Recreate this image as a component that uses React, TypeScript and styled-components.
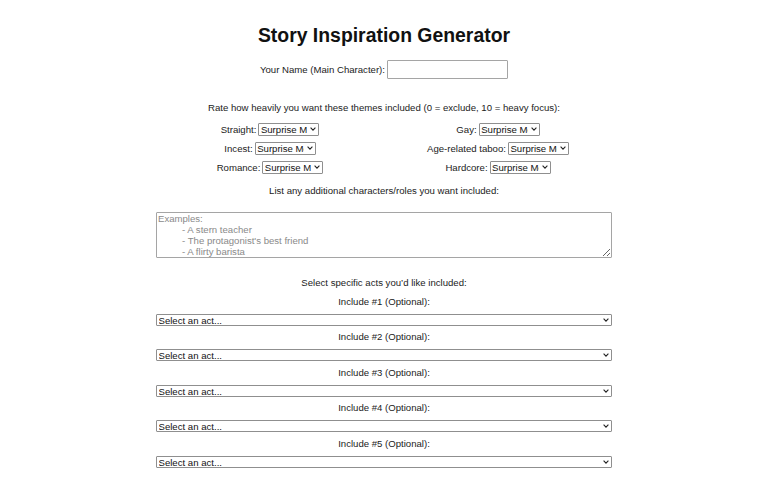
import React from "react";
import styled, { createGlobalStyle } from "styled-components";

const GlobalStyle = createGlobalStyle`
  html, body {
    margin: 0;
    padding: 0;
    background: #ffffff;
  }
  body {
    font-family: "Liberation Sans", Arial, sans-serif;
    font-size: 9.6px;
    color: #222222;
  }
  * {
    box-sizing: border-box;
  }
`;

const Page = styled.main`
  width: 456px;
  margin: 0 auto;
  padding-top: 24px;
  display: flex;
  flex-direction: column;
  align-items: center;
`;

const Title = styled.h1`
  margin: 0;
  font-size: 19.4px;
  line-height: 22px;
  font-weight: bold;
  color: #111111;
  text-align: center;
`;

const NameRow = styled.div`
  margin-top: 14px;
  display: flex;
  align-items: center;
  gap: 2px;
  height: 19px;
`;

const Label = styled.label`
  font-size: 9.6px;
  line-height: 11px;
  color: #222222;
  white-space: nowrap;
`;

const TextInput = styled.input`
  width: 121px;
  height: 19px;
  margin: 0;
  padding: 1px 2px;
  font: inherit;
  border: 1px solid #a5a5a5;
  border-radius: 1px;
  background: #ffffff;
`;

const Note = styled.p<{ $top: number }>`
  margin: ${(p) => p.$top}px 0 0;
  font-size: 9.6px;
  line-height: 11px;
  color: #222222;
  text-align: center;
`;

const ThemeGrid = styled.div`
  margin-top: 10px;
  width: 100%;
  display: grid;
  grid-template-columns: 1fr 1fr;
  row-gap: 6px;
`;

const ThemeItem = styled.div`
  display: flex;
  justify-content: center;
  align-items: center;
  gap: 2px;
  height: 13px;
`;

/* Select box with a drawn chevron laid over its right end */
const SelectFrame = styled.div<{ $width: string; $height: number }>`
  position: relative;
  width: ${(p) => p.$width};
  height: ${(p) => p.$height}px;
  flex: none;
`;

const PlainSelect = styled.select`
  appearance: none;
  -webkit-appearance: none;
  display: block;
  width: 100%;
  height: 100%;
  margin: 0;
  padding: 0 11px 0 1.5px;
  font-family: inherit;
  font-size: 9.6px;
  line-height: 11px;
  color: #111111;
  border: 1px solid #8f8f8f;
  border-radius: 1px;
  background: #ffffff;
  outline: none;
`;

const Chevron = styled.svg`
  position: absolute;
  right: 3px;
  top: 50%;
  width: 6px;
  height: 4px;
  margin-top: -2px;
  pointer-events: none;
`;

const ExtraCharacters = styled.textarea`
  margin-top: 16.5px;
  width: 100%;
  height: 46px;
  padding: 0 1px;
  font: inherit;
  font-size: 9.6px;
  line-height: 11px;
  border: 1px solid #a5a5a5;
  border-radius: 1px;
  resize: vertical;
  &::placeholder {
    color: #8a8a8a;
  }
`;

const ActList = styled.div`
  margin-top: 8px;
  width: 100%;
  display: flex;
  flex-direction: column;
  gap: 5.5px;
`;

const ActGroup = styled.div`
  display: flex;
  flex-direction: column;
  align-items: center;
  gap: 7px;
`;

const themes = [
  ["Straight", "Gay"],
  ["Incest", "Age-related taboo"],
  ["Romance", "Hardcore"],
];

const levels = ["Surprise Me", "0", "1", "2", "3", "4", "5", "6", "7", "8", "9", "10"];

const placeholder =
  "Examples:\n         - A stern teacher\n         - The protagonist's best friend\n         - A flirty barista";

function DropDown({
  id,
  width,
  height,
  defaultValue,
  options,
}: {
  id: string;
  width: string;
  height: number;
  defaultValue: string;
  options: { value: string; label: string }[];
}) {
  return (
    <SelectFrame $width={width} $height={height}>
      <PlainSelect id={id} defaultValue={defaultValue}>
        {options.map((o) => (
          <option key={o.value} value={o.value}>
            {o.label}
          </option>
        ))}
      </PlainSelect>
      <Chevron viewBox="0 0 6 4" aria-hidden="true">
        <path d="M0.6 0.7 L3 3.1 L5.4 0.7" fill="none" stroke="#222" strokeWidth="1.1" />
      </Chevron>
    </SelectFrame>
  );
}

function ThemeControl({ name }: { name: string }) {
  const id = `theme-${name.toLowerCase().replace(/[^a-z]+/g, "-")}`;
  return (
    <ThemeItem>
      <Label htmlFor={id}>{name}:</Label>
      <DropDown
        id={id}
        width="61px"
        height={13}
        defaultValue="Surprise Me"
        options={levels.map((l) => ({ value: l, label: l }))}
      />
    </ThemeItem>
  );
}

export default function App() {
  return (
    <>
      <GlobalStyle />
      <Page>
        <Title>Story Inspiration Generator</Title>
        <NameRow>
          <Label htmlFor="main-name">Your Name (Main Character):</Label>
          <TextInput id="main-name" type="text" />
        </NameRow>

        <Note $top={22.5}>
          Rate how heavily you want these themes included (0 = exclude, 10 = heavy focus):
        </Note>
        <ThemeGrid>
          {themes.flat().map((t) => (
            <ThemeControl key={t} name={t} />
          ))}
        </ThemeGrid>

        <Note $top={11}>List any additional characters/roles you want included:</Note>
        <ExtraCharacters placeholder={placeholder} />

        <Note $top={18.5}>Select specific acts you’d like included:</Note>
        <ActList>
          {[1, 2, 3, 4, 5].map((n) => (
            <ActGroup key={n}>
              <Label htmlFor={`act-${n}`}>Include #{n} (Optional):</Label>
              <DropDown
                id={`act-${n}`}
                width="100%"
                height={12}
                defaultValue=""
                options={[{ value: "", label: "Select an act..." }]}
              />
            </ActGroup>
          ))}
        </ActList>
      </Page>
    </>
  );
}
